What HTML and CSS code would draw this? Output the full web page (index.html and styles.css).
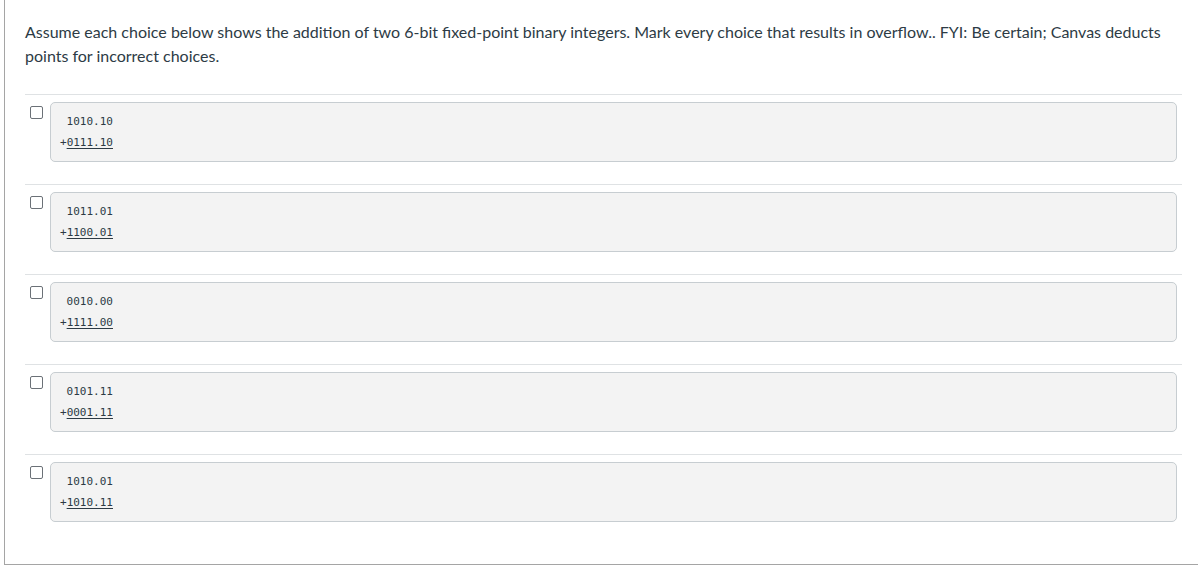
FILE: index.html
```html
<!DOCTYPE html>
<html>
<head>
<meta charset="utf-8">
<link rel="stylesheet" href="styles.css">
</head>
<body>
<div class="question">
  <p class="prompt">Assume each choice below shows the addition of two 6-bit fixed-point binary integers. Mark every choice that results in overflow.. FYI: Be certain; Canvas deducts points for incorrect choices.</p>
  <div class="answers">
    <div class="answer">
      <span class="check"></span>
      <pre class="code"> 1010.10
+<u>0111.10</u></pre>
    </div>
    <div class="answer">
      <span class="check"></span>
      <pre class="code"> 1011.01
+<u>1100.01</u></pre>
    </div>
    <div class="answer">
      <span class="check"></span>
      <pre class="code"> 0010.00
+<u>1111.00</u></pre>
    </div>
    <div class="answer">
      <span class="check"></span>
      <pre class="code"> 0101.11
+<u>0001.11</u></pre>
    </div>
    <div class="answer">
      <span class="check"></span>
      <pre class="code"> 1010.01
+<u>1010.11</u></pre>
    </div>
  </div>
</div>
</body>
</html>
```

FILE: styles.css
```css
html, body {
  margin: 0;
  padding: 0;
  background: #ffffff;
}
body {
  width: 1198px;
  height: 566px;
  overflow: hidden;
}
.question {
  margin-left: 4px;
  width: 1194px;
  height: 565px;
  box-sizing: border-box;
  border-left: 1px solid #a5a5a5;
  border-bottom: 1px solid #a5a5a5;
  padding: 20px 15px 0 20px;
  font-family: Lato, "Liberation Sans", sans-serif;
  color: #2d3b45;
}
.prompt {
  margin: 0;
  font-size: 16px;
  line-height: 24px;
  width: 1157px;
}
.answers {
  margin-top: 26px;
  width: 1157px;
}
.answer {
  display: flex;
  align-items: flex-start;
  border-top: 1px solid #dfe2e4;
  padding: 7px 5px 22px 5px;
}
.check {
  flex: none;
  width: 13px;
  height: 13px;
  box-sizing: border-box;
  border: 1px solid #6b7177;
  border-radius: 2px;
  margin-top: 4px;
  margin-right: 7px;
  background: #fff;
}
.code {
  flex: 1;
  margin: 0;
  padding: 8px 9px;
  height: 60px;
  box-sizing: border-box;
  background: #f3f3f3;
  border: 1px solid #c7cdd1;
  border-radius: 5px;
  font-family: "DejaVu Sans Mono", monospace;
  font-size: 11px;
  line-height: 21px;
  color: #2d3b45;
}
.code u {
  text-decoration-thickness: 1px;
  text-underline-offset: 2px;
}
```
